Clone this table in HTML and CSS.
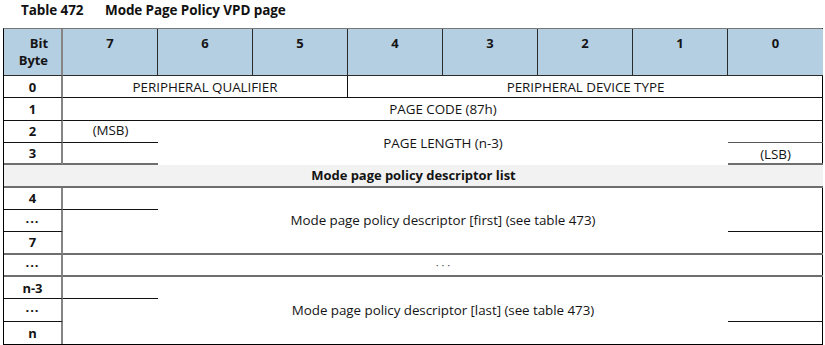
FILE: index.html
```html
<!DOCTYPE html>
<html lang="en">
<head>
<meta charset="utf-8">
<title>Mode Page Policy VPD page</title>
<link rel="stylesheet" href="styles.css">
</head>
<body>
<div class="caption"><span class="tno">Table 472</span><span class="tname">Mode Page Policy VPD page</span></div>
<div class="vpd">
  <div class="hd bitbyte"><span>Bit</span><span>Byte</span></div>
  <div class="hd">7</div>
  <div class="hd">6</div>
  <div class="hd">5</div>
  <div class="hd">4</div>
  <div class="hd">3</div>
  <div class="hd">2</div>
  <div class="hd">1</div>
  <div class="hd last">0</div>

  <div class="byte">0</div>
  <div class="cell s3 vline">PERIPHERAL QUALIFIER</div>
  <div class="cell s5">PERIPHERAL DEVICE TYPE</div>

  <div class="byte">1</div>
  <div class="cell s8">PAGE CODE (87h)</div>

  <div class="byte">2</div>
  <div class="cell top">(MSB)</div>
  <div class="cell s6 r2 nb">PAGE LENGTH (n-3)</div>
  <div class="cell gb"></div>

  <div class="byte gray">3</div>
  <div class="cell gray"></div>
  <div class="cell gray bot">(LSB)</div>

  <div class="section">Mode page policy descriptor list</div>

  <div class="byte">4</div>
  <div class="cell"></div>
  <div class="cell s6 r3 gray">Mode page policy descriptor [first] (see table 473)</div>
  <div class="cell r2"></div>
  <div class="byte dots">&middot;&middot;&middot;</div>
  <div class="cell r2 gray"></div>
  <div class="byte gray">7</div>
  <div class="cell gray"></div>

  <div class="byte gray dots">&middot;&middot;&middot;</div>
  <div class="cell s8 gray ell">&middot; &middot; &middot;</div>

  <div class="byte">n-3</div>
  <div class="cell"></div>
  <div class="cell s6 r3 nb">Mode page policy descriptor [last] (see table 473)</div>
  <div class="cell r2"></div>
  <div class="byte dots">&middot;&middot;&middot;</div>
  <div class="cell r2 nb"></div>
  <div class="byte nb">n</div>
  <div class="cell nb"></div>
</div>
</body>
</html>
```

FILE: styles.css
```css
html, body {
  margin: 0;
  padding: 0;
  background: #ffffff;
}

body {
  padding: 3px 0 0 3px;
  font-family: "Open Sans", "Liberation Sans", sans-serif;
  font-size: 13.4px;
  color: #141414;
}

.caption {
  height: 25px;
  padding-left: 18px;
  font-weight: 700;
  font-size: 13.5px;
  line-height: 15px;
  letter-spacing: -0.1px;
  color: #111;
}

.caption .tno {
  display: inline-block;
  width: 84px;
}

.vpd {
  display: grid;
  grid-template-columns: 59px repeat(8, 95px);
  grid-template-rows: 47px repeat(12, 22.33px);
  width: 820px;
  box-sizing: border-box;
  border-left: 1px solid #000;
  border-right: 1px solid #000;
  border-bottom: 1px solid #000;
  border-top: 1px solid #777;
  letter-spacing: -0.05px;
}

.vpd > div {
  box-sizing: border-box;
  display: flex;
  align-items: center;
  justify-content: center;
  white-space: nowrap;
  border-bottom: 1px solid #111;
}

.hd {
  background: #b4cee2;
  font-weight: 700;
  font-size: 13px;
  align-items: flex-start !important;
  padding-top: 6px;
  line-height: 17px;
  border-right: 1px solid #2b2b2b;
  border-bottom: 1px solid #2b2b2b !important;
}

.hd.last {
  border-right: none;
}

.hd.bitbyte {
  flex-direction: column;
  align-items: flex-end !important;
  justify-content: flex-start;
  padding-right: 13px;
  border-right: 2px solid #858585;
}

.byte {
  grid-column: 1;
  font-weight: 700;
  font-size: 13px;
  border-right: 2px solid #858585;
}

.byte.dots {
  letter-spacing: 1px;
  font-size: 13px;
}

.s3 { grid-column: span 3; }
.s5 { grid-column: span 5; }
.s6 { grid-column: span 6; }
.s8 { grid-column: span 8; }
.r2 { grid-row: span 2; }
.r3 { grid-row: span 3; }

.vline {
  border-right: 1px solid #111;
}

.top {
  align-items: flex-start !important;
  padding-top: 0;
}

.bot {
  align-items: flex-end !important;
  padding-bottom: 0;
}

.vpd > .gray {
  border-bottom: 2px solid #6e6e6e;
}

.vpd > .gb {
  border-bottom: 1px solid #555;
}

.vpd > .nb {
  border-bottom: none;
}

.section {
  grid-column: 1 / -1;
  background: #f2f2f2;
  font-weight: 700;
  font-size: 13px;
  border-bottom: 2px solid #6e6e6e !important;
}

.ell {
  color: #444;
  font-size: 11px;
  letter-spacing: 0;
}
```
